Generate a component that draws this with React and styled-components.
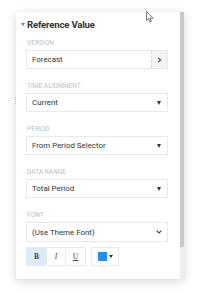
import styled, { createGlobalStyle } from "styled-components";

const Global = createGlobalStyle`
  html, body {
    margin: 0;
    background: #ffffff;
    font-family: Roboto, "Liberation Sans", Arial, sans-serif;
  }
`;

const Page = styled.div`
  position: relative;
  width: 200px;
  height: 300px;
  padding: 12px 16px 0 16px;
  box-sizing: border-box;
`;

const Card = styled.div`
  display: flex;
  width: 168px;
  height: 267px;
  background: #ffffff;
  box-shadow: 0 3px 10px rgba(0, 0, 0, 0.15), 0 0 2px rgba(0, 0, 0, 0.06);
`;

const Body = styled.div`
  flex: 1;
  padding: 6px 12px 0 5px;
`;

const Header = styled.div`
  display: flex;
  align-items: center;
  height: 12px;
  font-size: 9.6px;
  font-weight: 700;
  color: #333333;
  letter-spacing: -0.2px;
`;

const Caret = styled.span`
  width: 0;
  height: 0;
  margin-right: 2px;
  border-left: 2px solid transparent;
  border-right: 2px solid transparent;
  border-top: 3px solid #2f8fe8;
`;

const Fields = styled.div`
  display: flex;
  flex-direction: column;
  gap: 13px;
  padding: 9px 0 0 5px;
`;

const Field = styled.div`
  display: flex;
  flex-direction: column;
  gap: 3px;
`;

const Label = styled.div`
  height: 8px;
  line-height: 8px;
  font-size: 6.6px;
  color: #c0c0c4;
  padding-left: 1px;
`;

const Box = styled.div`
  display: flex;
  align-items: center;
  height: ${(p) => (p.$tall ? 20 : 19)}px;
  box-sizing: border-box;
  border: 1px solid #e9e9ec;
  font-size: 7.9px;
  color: #333333;
`;

const Value = styled.span`
  flex: 1;
  padding-left: 5px;
`;

const Side = styled.span`
  display: flex;
  align-items: center;
  justify-content: center;
  width: 15px;
  align-self: stretch;
  background: #f3f3f5;
  border-left: 1px dashed #d6d6da;
`;

const Down = styled.span`
  width: 0;
  height: 0;
  margin-right: 6px;
  border-left: 2.5px solid transparent;
  border-right: 2.5px solid transparent;
  border-top: 4px solid #333333;
`;

const Tools = styled.div`
  display: flex;
  gap: 5px;
  margin-top: -8px;
`;

const Group = styled.div`
  display: flex;
  height: 19px;
  border: 1px solid #e9e9ec;
  box-sizing: border-box;
`;

const Tool = styled.span`
  display: flex;
  align-items: center;
  justify-content: center;
  width: ${(p) => p.$w || 18}px;
  background: ${(p) => (p.$on ? "#dcebfa" : "#ffffff")};
  border-right: ${(p) => (p.$last ? "none" : "1px solid #ececef")};
  font-family: "Liberation Serif", "DejaVu Serif", serif;
  font-size: 7.5px;
  color: #444;
  font-weight: ${(p) => (p.$b ? 700 : 400)};
  font-style: ${(p) => (p.$i ? "italic" : "normal")};
  text-decoration: ${(p) => (p.$u ? "underline" : "none")};
`;

const Swatch = styled.span`
  width: 9px;
  height: 9px;
  background: #1e90ff;
  margin-right: 2px;
`;

const SmallDown = styled.span`
  width: 0;
  height: 0;
  border-left: 2.5px solid transparent;
  border-right: 2.5px solid transparent;
  border-top: 3px solid #333333;
`;

const Scroll = styled.div`
  display: flex;
  flex-direction: column;
  width: 4px;
  background: #eeeef2;
`;

const Thumb = styled.div`
  height: 235px;
  background: #c9c9cc;
`;

const Handle = styled.div`
  position: absolute;
  left: 15px;
  top: 97px;
  width: 1px;
  height: 8px;
  background: repeating-linear-gradient(
    to bottom,
    #9cc9f0 0 1px,
    transparent 1px 2px
  );
`;

const Pointer = styled.svg`
  position: absolute;
  left: 146px;
  top: 11px;
`;

function Select({ label, value, chevron, side }) {
  return (
    <Field>
      <Label>{label}</Label>
      <Box $tall={chevron}>
        <Value>{value}</Value>
        {side ? (
          <Side>
            <svg width="5" height="6" viewBox="0 0 5 6">
              <path d="M1 0.8 L3.6 3 L1 5.2" fill="none" stroke="#444" strokeWidth="1.1" />
            </svg>
          </Side>
        ) : chevron ? (
          <svg width="6" height="4" viewBox="0 0 6 4" style={{ marginRight: 5 }}>
            <path d="M0.6 0.6 L3 3 L5.4 0.6" fill="none" stroke="#444" strokeWidth="1.2" />
          </svg>
        ) : (
          <Down />
        )}
      </Box>
    </Field>
  );
}

export default function App() {
  return (
    <Page>
      <Global />
      <Card>
        <Body>
          <Header>
            <Caret />
            Reference Value
          </Header>
          <Fields>
            <Select label="VERSION" value="Forecast" side />
            <Select label="TIME ALIGNMENT" value="Current" />
            <Select label="PERIOD" value="From Period Selector" />
            <Select label="DATA RANGE" value="Total Period" />
            <Select label="FONT" value="(Use Theme Font)" chevron />
            <Tools>
              <Group>
                <Tool $on $b $w={19}>B</Tool>
                <Tool $i>I</Tool>
                <Tool $u $last $w={19}>U</Tool>
              </Group>
              <Group>
                <Tool $last $w={26}>
                  <Swatch />
                  <SmallDown />
                </Tool>
              </Group>
            </Tools>
          </Fields>
        </Body>
        <Scroll>
          <Thumb />
        </Scroll>
      </Card>
      <Handle />
      <Pointer width="8" height="12" viewBox="0 0 8 12">
        <path
          d="M0.5 0.5 L0.5 9.5 L2.6 7.6 L4 11 L5.4 10.4 L4 7.2 L7 7.2 Z"
          fill="#ffffff"
          stroke="#555"
          strokeWidth="0.8"
          strokeLinejoin="round"
        />
      </Pointer>
    </Page>
  );
}
